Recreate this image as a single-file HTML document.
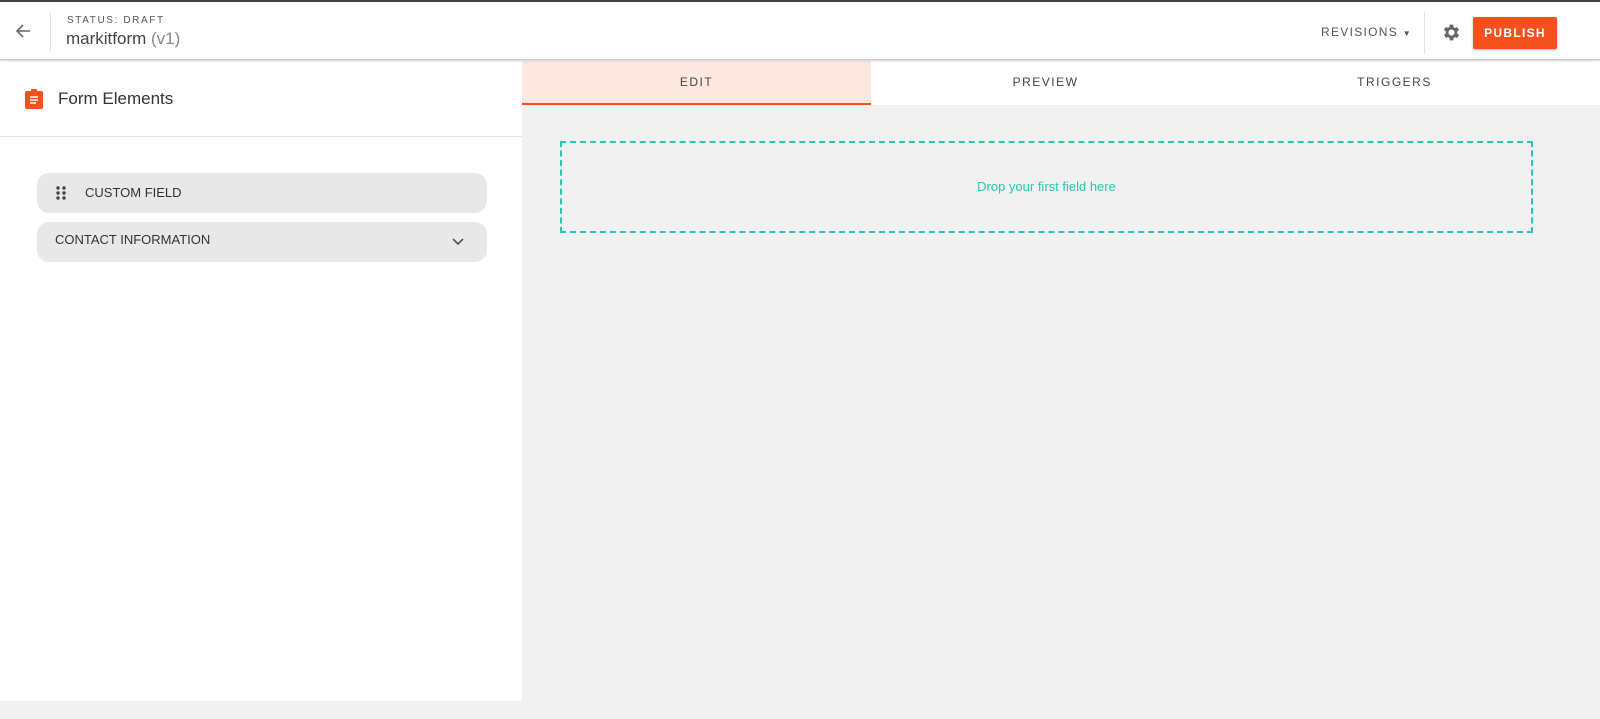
<!DOCTYPE html>
<html><head><style>
*{box-sizing:border-box;margin:0;padding:0}
body{width:1600px;height:719px;background:#f1f1f1;font-family:"Liberation Sans",sans-serif;position:relative;overflow:hidden}
.top{position:absolute;left:0;top:0;width:1600px;height:2px;background:#444}
.hdr{position:absolute;left:0;top:2px;width:1600px;height:58px;background:#fff;border-bottom:1px solid #ccc;box-shadow:0 1px 3px rgba(0,0,0,.12);z-index:2}
.side{position:absolute;left:0;top:61px;width:522px;height:640px;background:#fff}
.tabs{position:absolute;left:522px;top:61px;width:1078px;height:44px;background:#fff;display:flex}
.tab{flex:0 0 349px;text-align:center;font-size:12px;letter-spacing:1.5px;color:#444;line-height:42px}
.tab.on{background:#fde8e1;border-bottom:2px solid #f4511e}
.drop{position:absolute;left:560px;top:141px;width:973px;height:92px;border:2px dashed #2bc6b0;color:#2bc6b0;font-size:13px;text-align:center;line-height:88px}
.pill{position:absolute;left:37px;width:450px;height:40px;background:#e8e8e8;border-radius:12px;font-size:13px;color:#333;line-height:40px}
</style></head><body>
<div class="top"></div>
<div class="hdr">
 <svg style="position:absolute;left:15px;top:21px" width="16" height="16" viewBox="0 0 16 16"><path d="M15 8H2M8 2L2 8l6 6" stroke="#666" stroke-width="1.6" fill="none"/></svg>
 <div style="position:absolute;left:50px;top:10px;width:1px;height:40px;background:#e4e4e4"></div>
 <div style="position:absolute;left:67px;top:13px;font-size:10px;letter-spacing:1.6px;color:#555">STATUS: DRAFT</div>
 <div style="position:absolute;left:66px;top:27px;font-size:17px;color:#444">markitform <span style="color:#888">(v1)</span></div>
 <div style="position:absolute;left:1321px;top:23px;font-size:12px;letter-spacing:1.3px;color:#555">REVISIONS <span style="font-size:8px">▼</span></div>
 <div style="position:absolute;left:1424px;top:10px;width:1px;height:42px;background:#e4e4e4"></div>
 <svg style="position:absolute;left:1441px;top:20px" width="21" height="21" viewBox="0 0 24 24"><path fill="#666" d="M19.4 13a7.5 7.5 0 000-2l2.1-1.6-2-3.5-2.5 1a7.5 7.5 0 00-1.7-1L15 3h-4l-.4 2.7a7.5 7.5 0 00-1.7 1l-2.5-1-2 3.5L6.6 11a7.5 7.5 0 000 2l-2.1 1.6 2 3.5 2.5-1a7.5 7.5 0 001.7 1L11 21h4l.4-2.7a7.5 7.5 0 001.7-1l2.5 1 2-3.5zM13 15.5a3.5 3.5 0 110-7 3.5 3.5 0 010 7z" transform="translate(-1 0)"/></svg>
 <div style="position:absolute;left:1473px;top:15px;width:84px;height:32px;background:#f4511e;border-radius:2px;color:#fff;font-size:12px;font-weight:bold;letter-spacing:1.3px;text-align:center;line-height:32px;box-shadow:0 1px 2px rgba(0,0,0,.3)">PUBLISH</div>
</div>
<div class="side">
 <svg style="position:absolute;left:25px;top:28px" width="18" height="20" viewBox="0 0 18 20"><rect x="0" y="2" width="18" height="18" rx="2" fill="#f4511e"/><rect x="6" y="0" width="6" height="4" rx="1" fill="#f4511e"/><path d="M5 8h8M5 11h8M5 14h6" stroke="#fff" stroke-width="1.6"/></svg>
 <div style="position:absolute;left:58px;top:28px;font-size:17px;color:#333">Form Elements</div>
 <div style="position:absolute;left:0;top:75px;width:522px;height:1px;background:#e4e4e4"></div>
 <div class="pill" style="top:112px"><svg style="position:absolute;left:19px;top:13px" width="10" height="14" viewBox="0 0 10 14"><g fill="#444"><circle cx="2" cy="2" r="1.7"/><circle cx="8" cy="2" r="1.7"/><circle cx="2" cy="7" r="1.7"/><circle cx="8" cy="7" r="1.7"/><circle cx="2" cy="12" r="1.7"/><circle cx="8" cy="12" r="1.7"/></g></svg><span style="position:absolute;left:48px">CUSTOM FIELD</span></div>
 <div class="pill" style="top:161px"><span style="position:absolute;left:18px;top:-2px">CONTACT INFORMATION</span><svg style="position:absolute;left:415px;top:16px" width="12" height="8" viewBox="0 0 12 8"><path d="M1 1l5 5 5-5" stroke="#555" stroke-width="1.6" fill="none"/></svg></div>
</div>
<div class="tabs"><div class="tab on">EDIT</div><div class="tab">PREVIEW</div><div class="tab">TRIGGERS</div></div>
<div class="drop">Drop your first field here</div>
</body></html>
